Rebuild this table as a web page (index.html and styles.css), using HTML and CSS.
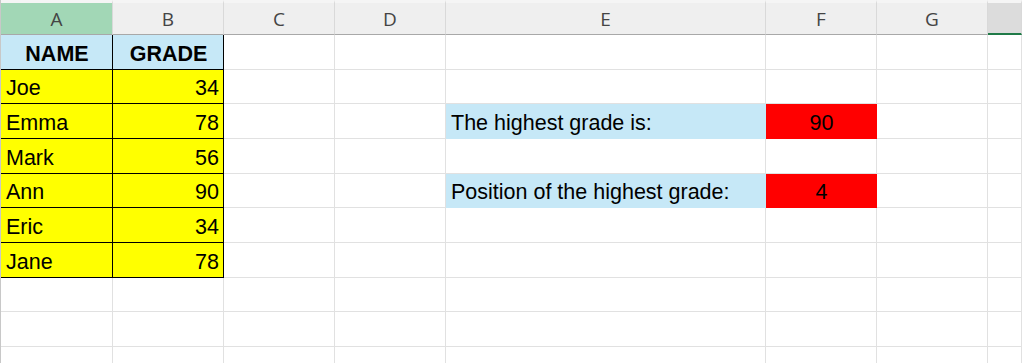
FILE: index.html
```html
<!DOCTYPE html>
<html lang="en">
<head>
<meta charset="utf-8">
<title>Highest grade</title>
<link rel="stylesheet" href="styles.css">
</head>
<body>
<div class="sheet">
  <div class="ch sel">A</div><div class="ch">B</div><div class="ch">C</div><div class="ch">D</div><div class="ch">E</div><div class="ch">F</div><div class="ch">G</div><div class="ch hov"></div>

  <div class="c t hd">NAME</div><div class="c t hd">GRADE</div><div class="c"></div><div class="c"></div><div class="c"></div><div class="c"></div><div class="c"></div><div class="c"></div>

  <div class="c t y">Joe</div><div class="c t y num">34</div><div class="c"></div><div class="c"></div><div class="c"></div><div class="c"></div><div class="c"></div><div class="c"></div>

  <div class="c t y">Emma</div><div class="c t y num">78</div><div class="c"></div><div class="c"></div><div class="c lbl">The highest grade is:</div><div class="c red">90</div><div class="c"></div><div class="c"></div>

  <div class="c t y">Mark</div><div class="c t y num">56</div><div class="c"></div><div class="c"></div><div class="c"></div><div class="c"></div><div class="c"></div><div class="c"></div>

  <div class="c t y">Ann</div><div class="c t y num">90</div><div class="c"></div><div class="c"></div><div class="c lbl">Position of the highest grade:</div><div class="c red">4</div><div class="c"></div><div class="c"></div>

  <div class="c t y">Eric</div><div class="c t y num">34</div><div class="c"></div><div class="c"></div><div class="c"></div><div class="c"></div><div class="c"></div><div class="c"></div>

  <div class="c t y">Jane</div><div class="c t y num">78</div><div class="c"></div><div class="c"></div><div class="c"></div><div class="c"></div><div class="c"></div><div class="c"></div>

  <div class="c"></div><div class="c"></div><div class="c"></div><div class="c"></div><div class="c"></div><div class="c"></div><div class="c"></div><div class="c"></div>

  <div class="c"></div><div class="c"></div><div class="c"></div><div class="c"></div><div class="c"></div><div class="c"></div><div class="c"></div><div class="c"></div>

  <div class="c"></div><div class="c"></div><div class="c"></div><div class="c"></div><div class="c"></div><div class="c"></div><div class="c"></div><div class="c"></div>
</div>
</body>
</html>
```

FILE: styles.css
```css
html, body {
  margin: 0;
  padding: 0;
  background: #ffffff;
  overflow: hidden;
}

.sheet {
  display: grid;
  grid-template-columns: 112px 111px 111px 111px 320px 111px 111px 1fr;
  grid-template-rows: 35px repeat(10, 34.667px);
  width: 1022px;
  height: 363px;
  overflow: hidden;
  border-left: 1px solid #c8c8c8;
  box-sizing: border-box;
  font-family: "Liberation Sans", Arial, sans-serif;
}

.ch {
  box-sizing: border-box;
  background: #efefef;
  border-top: 3px solid #f5f5f5;
  border-right: 1px solid #d9d9d9;
  border-bottom: 1px solid #a8a8a8;
  display: flex;
  align-items: center;
  justify-content: center;
  font-family: "Open Sans", "Noto Sans", sans-serif;
  font-size: 19px;
  color: #444444;
}

.ch.sel {
  background: #a2d7b6;
}

.ch.hov {
  background: #dcdcdc;
  border-bottom: 2px solid #1f7a47;
}

.c {
  box-sizing: border-box;
  border-right: 1px solid #e1e1e1;
  border-bottom: 1px solid #e1e1e1;
  display: flex;
  align-items: flex-end;
  padding: 0 4px 3px 5px;
  font-size: 21.5px;
  line-height: 24px;
  color: #000;
  white-space: nowrap;
  overflow: visible;
}

.c.t {
  border-right-color: #000;
  border-bottom-color: #000;
}

.c.hd {
  background: #c6e8f7;
  font-weight: bold;
  justify-content: center;
}

.c.y {
  background: #ffff00;
}

.c.num {
  justify-content: flex-end;
}

.c.lbl {
  background: #c6e8f7;
  border-right-color: #c6e8f7;
  border-bottom-color: #c6e8f7;
}

.c.red {
  background: #ff0000;
  border-right-color: #ff0000;
  border-bottom-color: #ff0000;
  justify-content: center;
}
```
